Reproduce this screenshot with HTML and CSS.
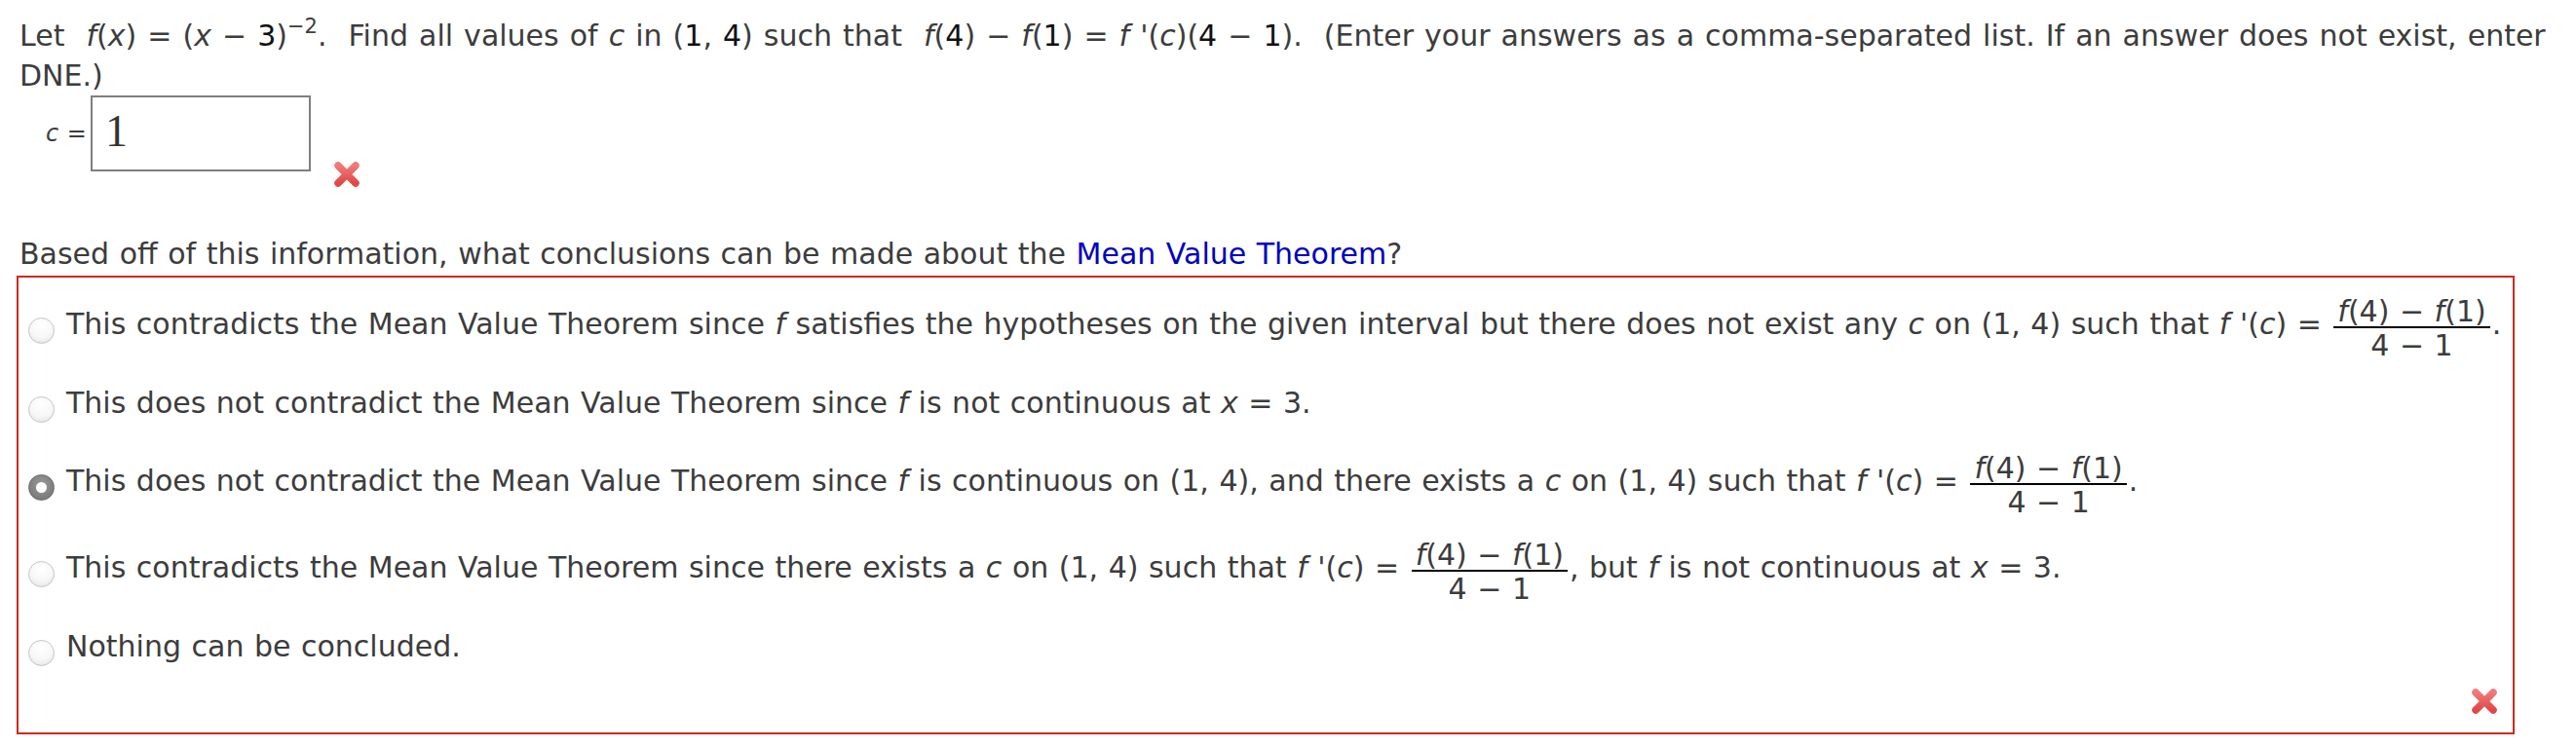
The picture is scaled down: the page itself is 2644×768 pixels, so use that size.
FILE: index.html
```html
<!DOCTYPE html>
<html>
<head>
<meta charset="utf-8">
<link rel="stylesheet" href="styles.css">
</head>
<body>
<div class="page">
  <p class="question q1">Let&nbsp; <i>f</i>(<i>x</i>) = (<i>x</i> − <span class="n">3</span>)<sup>−2</sup>.&nbsp; Find all values of <i>c</i> in (<span class="n">1</span>, <span class="n">4</span>) such that&nbsp; <i>f</i>(<span class="n">4</span>) − <i>f</i>(<span class="n">1</span>) = <i>f</i> '(<i>c</i>)(<span class="n">4</span> − <span class="n">1</span>).&nbsp; (Enter your answers as a comma-separated list. If an answer does not exist, enter DNE.)</p>

  <div class="answer">
    <span class="label"><i>c</i> =</span>
    <span class="inputbox">1</span>
    <svg class="xmark xmark-inline" viewBox="0 0 30 30" width="30" height="30"><defs><linearGradient id="g1" x1="0" y1="0" x2="0" y2="1"><stop offset="0" stop-color="#f07a7a"/><stop offset="1" stop-color="#e04848"/></linearGradient></defs><path d="M6 6 L24 24 M24 6 L6 24" stroke="url(#g1)" stroke-width="7.5" stroke-linecap="round" fill="none"/></svg>
  </div>

  <p class="question q2">Based off of this information, what conclusions can be made about the <span class="link">Mean Value Theorem</span>?</p>

  <div class="choices">
    <div class="opt"><span class="radio"></span><span class="txt">This contradicts the Mean Value Theorem since <i>f</i> satisfies the hypotheses on the given interval but there does not exist any <i>c</i> on (1, 4) such that <i>f</i> '(<i>c</i>) = <span class="frac"><span class="num"><i>f</i>(4) − <i>f</i>(1)</span><span class="den">4 − 1</span></span>.</span></div>
    <div class="opt"><span class="radio"></span><span class="txt">This does not contradict the Mean Value Theorem since <i>f</i> is not continuous at <i>x</i> = 3.</span></div>
    <div class="opt"><span class="radio checked"></span><span class="txt">This does not contradict the Mean Value Theorem since <i>f</i> is continuous on (1, 4), and there exists a <i>c</i> on (1, 4) such that <i>f</i> '(<i>c</i>) = <span class="frac"><span class="num"><i>f</i>(4) − <i>f</i>(1)</span><span class="den">4 − 1</span></span>.</span></div>
    <div class="opt"><span class="radio"></span><span class="txt">This contradicts the Mean Value Theorem since there exists a <i>c</i> on (1, 4) such that <i>f</i> '(<i>c</i>) = <span class="frac"><span class="num"><i>f</i>(4) − <i>f</i>(1)</span><span class="den">4 − 1</span></span>, but <i>f</i> is not continuous at <i>x</i> = 3.</span></div>
    <div class="opt"><span class="radio"></span><span class="txt">Nothing can be concluded.</span></div>
    <svg class="xmark xmark-corner" viewBox="0 0 30 30" width="30" height="30"><defs><linearGradient id="g2" x1="0" y1="0" x2="0" y2="1"><stop offset="0" stop-color="#f07a7a"/><stop offset="1" stop-color="#e04848"/></linearGradient></defs><path d="M6 6 L24 24 M24 6 L6 24" stroke="url(#g2)" stroke-width="7.5" stroke-linecap="round" fill="none"/></svg>
  </div>
</div>
</body>
</html>
```

FILE: styles.css
```css
html, body {
  margin: 0;
  padding: 0;
  background: #ffffff;
}

.page {
  padding: 16px 8px 0 20px;
  font-family: "DejaVu Sans", Verdana, sans-serif;
  font-size: 30px;
  line-height: 41px;
  word-spacing: 1px;
  color: #3c3c3c;
}

.question {
  margin: 0;
}

.q1 {
  word-spacing: 1.5px;
}

.n {
  color: #111;
}

sup {
  font-size: 21px;
  line-height: 0;
  vertical-align: 13px;
}

.answer {
  display: flex;
  align-items: flex-start;
  margin: 0 0 0 27px;
  height: 110px;
}

.label {
  margin-top: 19px;
  margin-right: 4px;
  font-size: 24px;
}

.inputbox {
  box-sizing: border-box;
  width: 226px;
  height: 78px;
  border: 2px solid #7f7f7f;
  font-family: "Liberation Serif", "Times New Roman", serif;
  font-size: 46px;
  line-height: 70px;
  color: #333;
  padding-left: 13px;
}

.xmark-inline {
  margin-top: 66px;
  margin-left: 22px;
}

.q2 {
  margin-top: 32px;
}

.link {
  color: #0000c0;
}

.choices {
  position: relative;
  margin: 2px 0 0 -3px;
  width: 2564px;
  height: 471px;
  border: 2px solid #d0291f;
  padding: 19px 0 0 10px;
  box-sizing: border-box;
}

.opt {
  margin-bottom: 31px;
  white-space: nowrap;
}

.radio {
  display: inline-block;
  box-sizing: border-box;
  width: 27px;
  height: 27px;
  border-radius: 50%;
  border: 1px solid #c4c4c4;
  background: radial-gradient(circle at 50% 30%, #ffffff 0%, #f7f7f7 55%, #dedede 100%);
  margin-right: 12px;
  vertical-align: -10px;
  position: relative;
}

.radio.checked {
  border-color: #6a6a6a;
  background: radial-gradient(circle at 50% 40%, #9c9c9c 0%, #7c7c7c 70%, #666666 100%);
}

.radio.checked::after {
  content: "";
  position: absolute;
  left: 50%;
  top: 50%;
  width: 11px;
  height: 11px;
  margin: -5.5px 0 0 -5.5px;
  border-radius: 50%;
  background: #ffffff;
}

.frac {
  display: inline-block;
  vertical-align: -22px;
  text-align: center;
  margin: 0 2px -11px 2px;
}

.num {
  display: block;
  line-height: 31px;
  padding: 0 4px;
  border-bottom: 2px solid #000;
}

.den {
  display: block;
  line-height: 36px;
  padding: 0 4px;
}

.xmark-corner {
  position: absolute;
  right: 14px;
  bottom: 17px;
}
```
